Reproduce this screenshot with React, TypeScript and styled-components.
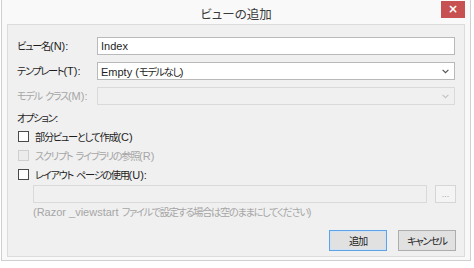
import React from "react";
import styled, { createGlobalStyle, css } from "styled-components";

const GlobalStyle = createGlobalStyle`
  body {
    margin: 0;
    background: #ffffff;
    font-family: "Liberation Sans", "Noto Sans CJK JP", sans-serif;
  }
`;

// Japanese runs are set a little tighter, the way Meiryo UI sits next to Latin text
const Cjk = styled.span`
  font-family: "Noto Sans CJK JP", sans-serif;
  font-feature-settings: "palt";
  font-size: 10.2px;
  letter-spacing: -1.3px;
`;

const Jp = ({ text }: { text: string }) => (
  <>
    {text
      .split(/([\u3000-\u30ff\u4e00-\u9fff\uff00-\uffef]+)/)
      .map((part, i) => (i % 2 ? <Cjk key={i}>{part}</Cjk> : part))}
  </>
);

const Window = styled.div`
  width: 470px;
  height: 261px;
  margin-left: 1px;
  box-sizing: border-box;
  border: 1px solid #cfcfcf;
  border-top: none;
  background: #f9f9f9;
  display: flex;
  flex-direction: column;
`;

const TitleBar = styled.div`
  height: 24px;
  flex: none;
  display: grid;
  grid-template-columns: 1fr auto 1fr;
  align-items: start;
`;

const Title = styled.div`
  grid-column: 2;
  font-family: "Noto Sans CJK JP", sans-serif;
  font-feature-settings: "palt";
  font-size: 12.5px;
  line-height: 27px;
  color: #3a3a3a;
`;

const CloseButton = styled.div`
  grid-column: 3;
  justify-self: end;
  margin-right: 5px;
  margin-top: 1px;
  width: 24px;
  height: 17px;
  background: #c75050;
  color: #ffffff;
  font-size: 12px;
  font-weight: bold;
  line-height: 17px;
  text-align: center;
  font-family: "DejaVu Sans", sans-serif;
`;

const Panel = styled.div`
  flex: 1;
  margin: 0 5px 3px 5px;
  border: 1px solid #dcdcdc;
  background: #f0f0f0;
  padding: 12px 8px 5px 9px;
  display: flex;
  flex-direction: column;
  font-size: 11px;
  color: #1e1e1e;
`;

const FieldGrid = styled.div`
  display: grid;
  grid-template-columns: 80px 1fr;
  grid-auto-rows: 18px;
  row-gap: 7px;
  align-items: center;
  margin-right: 1px;
`;

const Label = styled.div<{ $disabled?: boolean }>`
  line-height: 18px;
  white-space: nowrap;
  color: ${(p) => (p.$disabled ? "#a6a6a6" : "#1e1e1e")};
`;

const boxBase = css`
  height: 18px;
  box-sizing: border-box;
  display: flex;
  align-items: center;
  padding: 0 3px;
`;

const TextBox = styled.div<{ $disabled?: boolean }>`
  ${boxBase}
  flex: 1;
  border: 1px solid ${(p) => (p.$disabled ? "#dadada" : "#b9b9b9")};
  background: ${(p) => (p.$disabled ? "#f0f0f0" : "#ffffff")};
`;

const SelectBox = styled(TextBox)`
  justify-content: space-between;
  padding-right: 5px;
`;

const Chevron = ({ color }: { color: string }) => (
  <svg width="7" height="5" viewBox="0 0 7 5">
    <path d="M0.6 0.8 L3.5 3.7 L6.4 0.8" fill="none" stroke={color} strokeWidth="1.2" />
  </svg>
);

const SectionLabel = styled.div`
  margin-top: 5px;
  line-height: 16px;
`;

const CheckRow = styled.div<{ $disabled?: boolean; $first?: boolean }>`
  display: flex;
  align-items: center;
  gap: 6px;
  height: 19px;
  white-space: nowrap;
  margin-top: ${(p) => (p.$first ? "1px" : "0")};
  color: ${(p) => (p.$disabled ? "#a6a6a6" : "#1e1e1e")};
`;

const CheckBox = styled.span<{ $disabled?: boolean }>`
  width: 11px;
  height: 11px;
  flex: none;
  box-sizing: border-box;
  border: 1px solid ${(p) => (p.$disabled ? "#cfcfcf" : "#4a4a4a")};
  background: ${(p) => (p.$disabled ? "#ececec" : "#ffffff")};
  margin-left: 1px;
`;

const LayoutRow = styled.div`
  display: flex;
  gap: 8px;
  margin: 1px 0 0 16px;
`;

const BrowseButton = styled.div`
  ${boxBase}
  width: 21px;
  justify-content: center;
  border: 1px solid #d6d6d6;
  background: #f4f4f4;
  color: #a6a6a6;
  font-size: 9px;
`;

const Hint = styled.div`
  margin: 1px 0 0 16px;
  line-height: 16px;
  white-space: nowrap;
  color: #a6a6a6;
`;

const ButtonBar = styled.div`
  display: flex;
  justify-content: flex-end;
  gap: 11px;
  margin-top: 10px;
`;

const DialogButton = styled.div<{ $default?: boolean }>`
  width: 58px;
  height: 21px;
  box-sizing: border-box;
  display: flex;
  align-items: center;
  justify-content: center;
  background: #e1e1e1;
  border: 1px solid ${(p) => (p.$default ? "#5fa3e6" : "#adadad")};
  ${(p) => p.$default && "box-shadow: inset 0 0 0 1px #cfe3f7;"}
  color: #1e1e1e;
`;

export default function App() {
  return (
    <>
      <GlobalStyle />
      <Window>
        <TitleBar>
          <Title>ビューの追加</Title>
          <CloseButton>×</CloseButton>
        </TitleBar>
        <Panel>
          <FieldGrid>
            <Label><Jp text="ビュー名(N):" /></Label>
            <TextBox>Index</TextBox>
            <Label><Jp text="テンプレート(T):" /></Label>
            <SelectBox>
              <span><Jp text="Empty (モデルなし)" /></span>
              <Chevron color="#555555" />
            </SelectBox>
            <Label $disabled><Jp text="モデル クラス(M):" /></Label>
            <SelectBox $disabled>
              <span />
              <Chevron color="#c4c4c4" />
            </SelectBox>
          </FieldGrid>
          <SectionLabel><Jp text="オプション:" /></SectionLabel>
          <CheckRow $first>
            <CheckBox />
            <span><Jp text="部分ビューとして作成(C)" /></span>
          </CheckRow>
          <CheckRow $disabled>
            <CheckBox $disabled />
            <span><Jp text="スクリプト ライブラリの参照(R)" /></span>
          </CheckRow>
          <CheckRow>
            <CheckBox />
            <span><Jp text="レイアウト ページの使用(U):" /></span>
          </CheckRow>
          <LayoutRow>
            <TextBox $disabled />
            <BrowseButton>...</BrowseButton>
          </LayoutRow>
          <Hint><Jp text="(Razor _viewstart ファイルで設定する場合は空のままにしてください)" /></Hint>
          <ButtonBar>
            <DialogButton $default><Jp text="追加" /></DialogButton>
            <DialogButton><Jp text="キャンセル" /></DialogButton>
          </ButtonBar>
        </Panel>
      </Window>
    </>
  );
}
